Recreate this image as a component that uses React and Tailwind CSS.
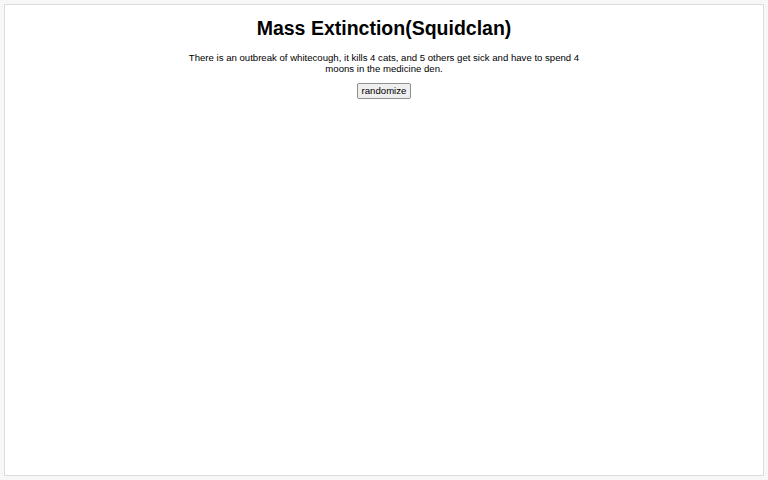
export default function App() {
  return (
    <div className="h-[480px] w-[768px] bg-[#f7f7f7] p-1 font-['Liberation_Sans',Arial,sans-serif]">
      <div className="flex h-[472px] flex-col items-center border border-[#dcdcdc] bg-white pt-[9px]">
        <h1 className="text-[19.5px] font-bold leading-[28px] text-black">Mass Extinction(Squidclan)</h1>
        <p className="mt-[10px] w-[400px] text-center text-[9.6px] leading-[11px] text-black">
          There is an outbreak of whitecough, it kills 4 cats, and 5 others get sick and have to spend 4 moons in the medicine den.
        </p>
        <button className="mt-[9px] rounded-[2px] border border-[#8f8f8f] bg-[#efefef] px-[4px] py-[1px] text-[9.6px] leading-[12px] text-black">
          randomize
        </button>
      </div>
    </div>
  );
}
